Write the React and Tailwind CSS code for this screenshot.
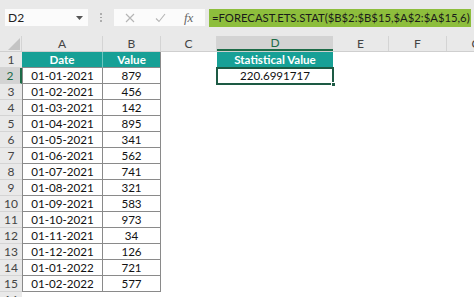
import React from "react";

const rows = [
  ["01-01-2021", "879"],
  ["01-02-2021", "456"],
  ["01-03-2021", "142"],
  ["01-04-2021", "895"],
  ["01-05-2021", "341"],
  ["01-06-2021", "562"],
  ["01-07-2021", "741"],
  ["01-08-2021", "321"],
  ["01-09-2021", "583"],
  ["01-10-2021", "973"],
  ["01-11-2021", "34"],
  ["01-12-2021", "126"],
  ["01-01-2022", "721"],
  ["01-02-2022", "577"],
];

function RowHead({ n, active }) {
  return (
    <div
      className={
        "w-[22px] shrink-0 flex items-center justify-center text-[12px] border-b border-[#d4d4d4] " +
        (active
          ? "bg-[#d3d3d3] text-[#1d6b47] border-r-2 border-r-[#1d6b47]"
          : "bg-[#e9e9e9] text-[#444]")
      }
    >
      {n}
    </div>
  );
}

export default function App() {
  return (
    <div className="w-[474px] h-[297px] overflow-hidden bg-white font-['Lato',sans-serif] text-[#111]">
      {/* toolbar */}
      <div className="h-[36px] bg-[#e9e9e9] flex items-start pt-[9px]">
        <div className="ml-[5px] w-[83px] h-[17px] bg-[#fbfbfb] flex items-center justify-between pl-[3px] pr-[5px] text-[12px] text-[#222]">
          <span>D2</span>
          <svg width="7" height="4" viewBox="0 0 7 4">
            <path d="M0 0 L7 0 L3.5 4 Z" fill="#555" />
          </svg>
        </div>
        <div className="ml-[12px] w-[2px] h-[17px] flex flex-col items-center justify-center gap-[2px]">
          <div className="w-[1.5px] h-[1.5px] bg-[#9a9a9a] rounded-full" />
          <div className="w-[1.5px] h-[1.5px] bg-[#9a9a9a] rounded-full" />
          <div className="w-[1.5px] h-[1.5px] bg-[#9a9a9a] rounded-full" />
        </div>
        <div className="ml-[12px] w-[91px] h-[17px] bg-[#fbfbfb] flex items-center">
          <svg className="ml-[11px]" width="10" height="10" viewBox="0 0 10 10">
            <path d="M1 1 L9 9 M9 1 L1 9" stroke="#b5b5b5" strokeWidth="1.1" fill="none" />
          </svg>
          <svg className="ml-[20px]" width="11" height="10" viewBox="0 0 11 10">
            <path d="M1 5.5 L4 8.5 L10 1" stroke="#b5b5b5" strokeWidth="1.1" fill="none" />
          </svg>
          <span className="ml-[18px] font-['Liberation_Serif',serif] italic text-[13px] text-[#666] leading-none">
            fx
          </span>
        </div>
        <div className="ml-[4px] w-[262px] h-[18px] bg-[#8dbe3c] flex items-center pl-[3px] text-[11.3px] text-[#1a1a1a] whitespace-nowrap overflow-hidden">
          =FORECAST.ETS.STAT($B$2:$B$15,$A$2:$A$15,6)
        </div>
      </div>

      {/* column headers */}
      <div className="h-[16px] flex bg-[#e9e9e9] text-[12px] text-[#444] border-b border-[#cfcfcf] overflow-hidden">
        <div className="w-[22px] shrink-0 flex items-end justify-end pr-[1px] pb-[1px] border-r border-[#d4d4d4]">
          <svg width="12" height="12" viewBox="0 0 12 12">
            <path d="M12 0 L12 12 L0 12 Z" fill="#c4c4c4" />
          </svg>
        </div>
        <div className="w-[81px] shrink-0 flex items-center justify-center border-r border-[#d4d4d4]">A</div>
        <div className="w-[58px] shrink-0 flex items-center justify-center border-r border-[#d4d4d4]">B</div>
        <div className="w-[56px] shrink-0 flex items-center justify-center border-r border-[#d4d4d4]">C</div>
        <div className="w-[116px] shrink-0 flex items-center justify-center bg-[#d3d3d3] text-[#1d6b47] border-b-2 border-[#1d6b47]">D</div>
        <div className="w-[56px] shrink-0 flex items-center justify-center border-r border-[#d4d4d4]">E</div>
        <div className="w-[58px] shrink-0 flex items-center justify-center border-r border-[#d4d4d4]">F</div>
        <div className="w-[58px] shrink-0 flex items-center justify-center">G</div>
      </div>

      {/* row 1 */}
      <div className="h-[16px] flex text-[11.6px]">
        <RowHead n={1} />
        <div className="w-[81px] shrink-0 bg-[#17a096] text-white font-bold flex items-center justify-center border-r border-[#6cc7c0] border-b border-b-[#8a8a8a]">
          Date
        </div>
        <div className="w-[58px] shrink-0 bg-[#17a096] text-white font-bold flex items-center justify-center border-r border-b border-[#8a8a8a]">
          Value
        </div>
        <div className="w-[56px] shrink-0" />
        <div className="w-[116px] shrink-0 bg-[#17a096] text-white font-bold flex items-center justify-center">
          Statistical Value
        </div>
      </div>

      {/* data rows */}
      {rows.map(([d, v], i) => (
        <div key={i} className="h-[16px] flex text-[11.6px]">
          <RowHead n={i + 2} active={i === 0} />
          <div className="w-[81px] shrink-0 flex items-center justify-center border-l border-r border-b border-[#8a8a8a]">
            {d}
          </div>
          <div className="w-[58px] shrink-0 flex items-center justify-center border-r border-b border-[#8a8a8a]">
            {v}
          </div>
          {i === 0 && (
            <>
              <div className="w-[56px] shrink-0" />
              <div className="relative w-[116px] shrink-0 flex items-center justify-center">
                220.6991717
                <div className="absolute -inset-[1px] border-2 border-[#1d5a44]" />
                <div className="absolute -right-[3px] -bottom-[3px] w-[5px] h-[5px] bg-[#1d5a44] border border-white" />
              </div>
            </>
          )}
        </div>
      ))}

      {/* row 16 */}
      <div className="h-[16px] flex text-[11.6px]">
        <RowHead n={16} />
      </div>
    </div>
  );
}
